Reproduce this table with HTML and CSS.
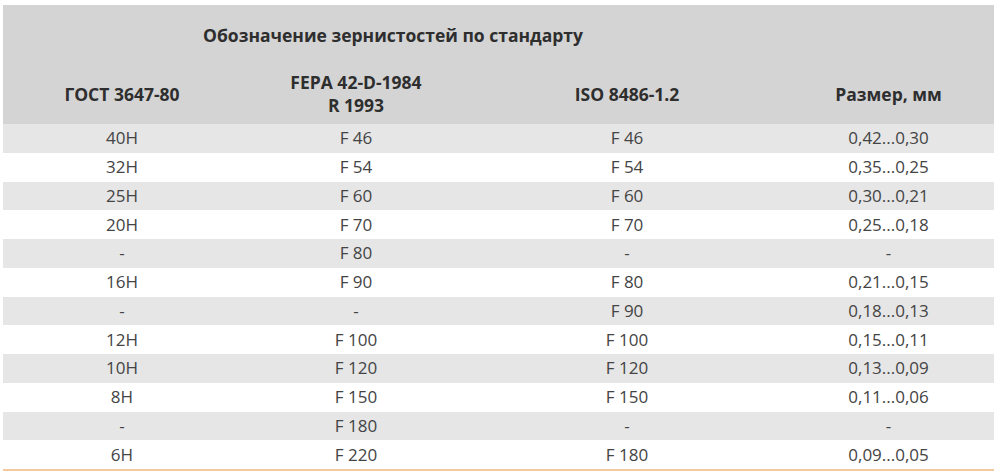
FILE: index.html
```html
<!DOCTYPE html>
<html lang="ru">
<head>
<meta charset="utf-8">
<link rel="stylesheet" href="styles.css">
</head>
<body>
<table class="grit">
  <colgroup>
    <col class="c1"><col class="c2"><col class="c3"><col class="c4">
  </colgroup>
  <thead>
    <tr class="h1"><th colspan="3">Обозначение зернистостей по стандарту</th><th></th></tr>
    <tr class="h2"><th>ГОСТ 3647-80</th><th>FEPA 42-D-1984<br>R 1993</th><th>ISO 8486-1.2</th><th>Размер, мм</th></tr>
  </thead>
  <tbody>
    <tr><td>40H</td><td>F 46</td><td>F 46</td><td>0,42...0,30</td></tr>
    <tr><td>32H</td><td>F 54</td><td>F 54</td><td>0,35...0,25</td></tr>
    <tr><td>25H</td><td>F 60</td><td>F 60</td><td>0,30...0,21</td></tr>
    <tr><td>20H</td><td>F 70</td><td>F 70</td><td>0,25...0,18</td></tr>
    <tr><td>-</td><td>F 80</td><td>-</td><td>-</td></tr>
    <tr><td>16H</td><td>F 90</td><td>F 80</td><td>0,21...0,15</td></tr>
    <tr><td>-</td><td>-</td><td>F 90</td><td>0,18...0,13</td></tr>
    <tr><td>12H</td><td>F 100</td><td>F 100</td><td>0,15...0,11</td></tr>
    <tr><td>10H</td><td>F 120</td><td>F 120</td><td>0,13...0,09</td></tr>
    <tr><td>8H</td><td>F 150</td><td>F 150</td><td>0,11...0,06</td></tr>
    <tr><td>-</td><td>F 180</td><td>-</td><td>-</td></tr>
    <tr><td>6H</td><td>F 220</td><td>F 180</td><td>0,09...0,05</td></tr>
  </tbody>
</table>
</body>
</html>
```
FILE: styles.css
```css
html, body {
  margin: 0;
  padding: 0;
  background: #ffffff;
}
body {
  padding: 5px 6px 0 3px;
  font-family: "Open Sans", "Liberation Sans", sans-serif;
  color: #3a3a3a;
}
.grit {
  width: 991px;
  border-collapse: collapse;
  table-layout: fixed;
  border-bottom: 2px solid #f5c9a0;
}
.c1 { width: 238px; }
.c2 { width: 230px; }
.c3 { width: 312px; }
.c4 { width: 211px; }
.grit thead th {
  background: #d4d4d4;
  font-weight: 700;
  font-size: 17.5px;
  color: #2e2e2e;
  text-align: center;
  padding: 0;
  line-height: 23px;
}
.grit .h1 th {
  height: 61px;
}
.grit .h2 th {
  height: 56px;
  vertical-align: middle;
  padding-bottom: 2px;
}
.grit tbody td {
  height: 28.75px;
  padding: 0;
  text-align: center;
  font-size: 17px;
  line-height: 20px;
  color: #444444;
}
.grit tbody tr:nth-child(odd) td {
  background: #e6e6e6;
}
```
